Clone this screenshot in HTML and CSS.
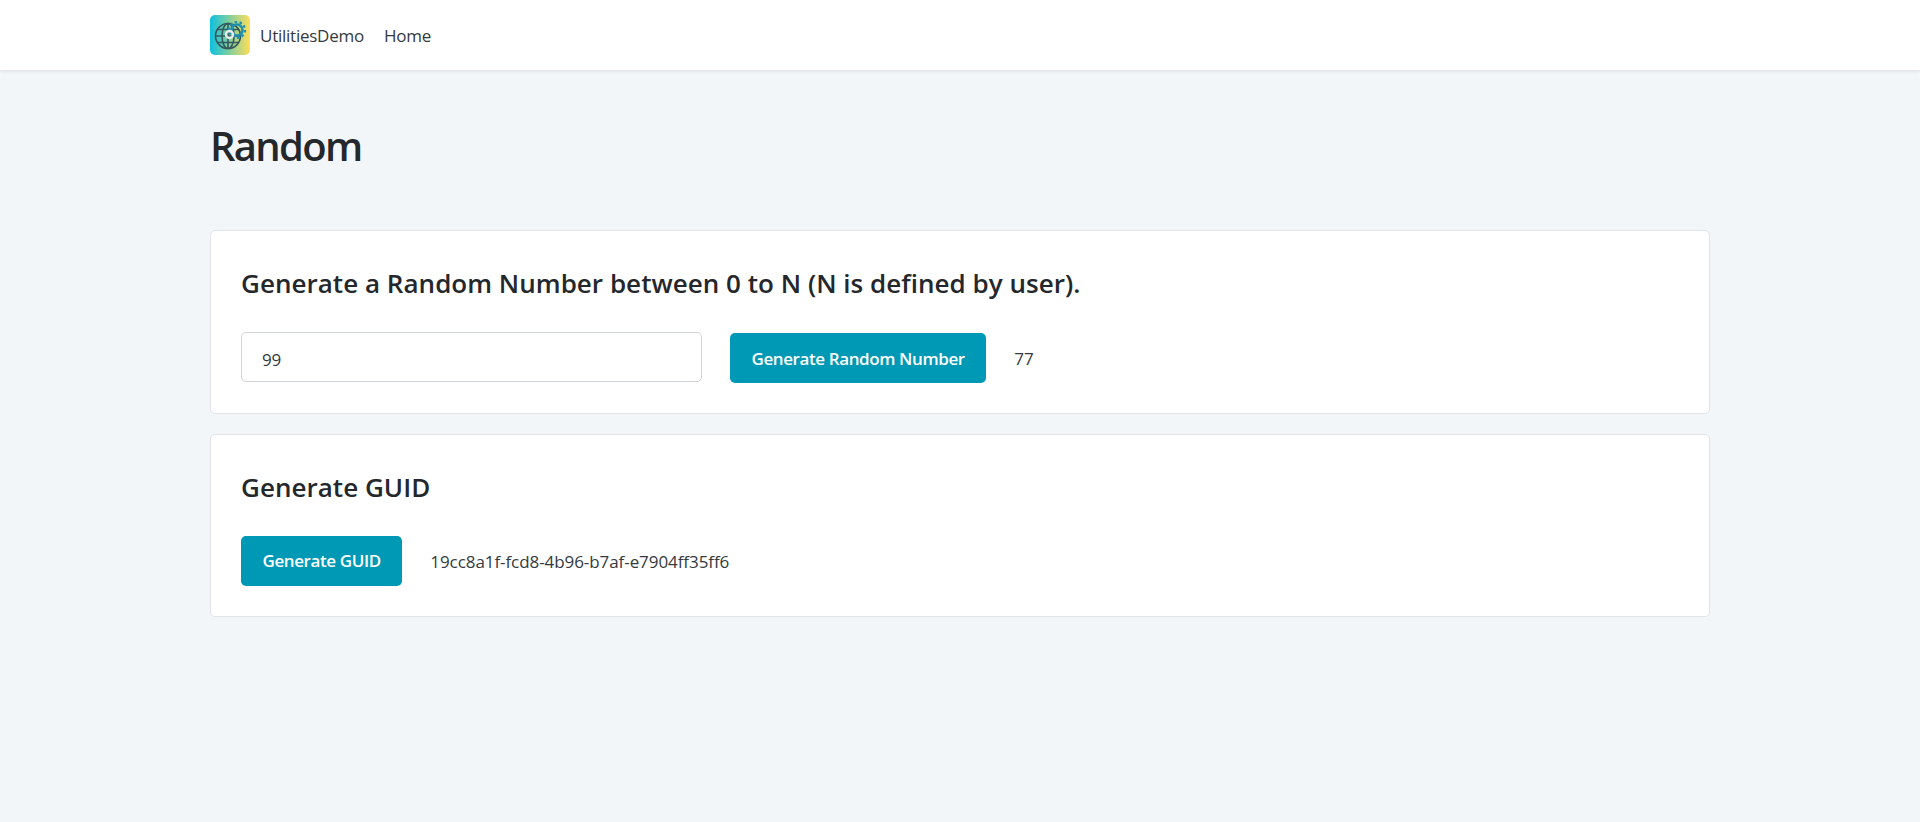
FILE: index.html
```html
<!DOCTYPE html>
<html lang="en">
<head>
<meta charset="utf-8">
<title>Random</title>
<link rel="stylesheet" href="styles.css">
</head>
<body>
<header class="navbar">
  <nav class="nav-inner">
    <a class="brand" href="#">
      <svg class="logo" viewBox="0 0 40 40" aria-hidden="true">
        <defs>
          <linearGradient id="lg" x1="0" y1="0" x2="1" y2="0">
            <stop offset="0" stop-color="#0cc0df"/>
            <stop offset="1" stop-color="#ffde59"/>
          </linearGradient>
        </defs>
        <rect width="40" height="40" rx="5" fill="url(#lg)"/>
        <g fill="none" stroke="#37595c" stroke-width="1.6">
          <circle cx="18" cy="21" r="12.5"/>
          <ellipse cx="18" cy="21" rx="6" ry="12.5"/>
          <path d="M18 8.500v25M5.500 21h25M7.500 14.500h21M7.500 27.500h21"/>
        </g>
        <g fill="none" stroke="#1f8fb0">
          <circle cx="27" cy="15" r="5.500" stroke-width="2.600"/>
          <circle cx="27" cy="15" r="8" stroke-width="2.200" stroke-dasharray="2.500 2.500"/>
        </g>
        <circle cx="19.500" cy="19.500" r="3.500" fill="none" stroke="#e8efe8" stroke-width="2.400"/>
      </svg>
      <span>UtilitiesDemo</span>
    </a>
    <a class="nav-link" href="#">Home</a>
  </nav>
</header>
<main class="container">
  <h1 class="page-title">Random</h1>
  <section class="card">
    <h2 class="card-title">Generate a Random Number between 0 to N (N is defined by user).</h2>
    <div class="row">
      <input class="field" type="text" value="99">
      <button class="btn btn-offset" type="button">Generate Random Number</button>
      <span class="result">77</span>
    </div>
  </section>
  <section class="card">
    <h2 class="card-title">Generate GUID</h2>
    <div class="row">
      <button class="btn" type="button">Generate GUID</button>
      <span class="result">19cc8a1f-fcd8-4b96-b7af-e7904ff35ff6</span>
    </div>
  </section>
</main>
</body>
</html>
```
FILE: styles.css
```css
* { box-sizing: border-box; }
html, body { margin: 0; }
body {
  min-height: 822px;
  background: #f3f6f9;
  color: #24272b;
  font-family: "Open Sans", "Noto Sans", sans-serif;
  font-size: 17px;
}
.navbar {
  height: 70px;
  background: #fff;
  box-shadow: 0 1px 4px rgba(0, 0, 0, .1);
}
.nav-inner {
  width: 1500px;
  height: 100%;
  margin: 0 auto;
  display: flex;
  align-items: center;
  gap: 20px;
}
.brand, .nav-link {
  color: #343a40;
  text-decoration: none;
  font-size: 17px;
  letter-spacing: -.25px;
}
.brand { display: flex; align-items: center; gap: 10px; }
.logo { width: 40px; height: 40px; display: block; }
.container {
  width: 1500px;
  margin: 0 auto;
  display: flex;
  flex-direction: column;
  gap: 20px;
}
.page-title {
  margin: 52px 0 28px;
  height: 60px;
  font-size: 40px;
  line-height: 48px;
  font-weight: 600;
  letter-spacing: -1.7px;
}
.card {
  height: 183.5px;
  padding: 36px 30px 0;
  background: #fff;
  border: 1px solid #e1e5ea;
  border-radius: 5px;
}
.card-title {
  margin: 0 0 33px;
  font-size: 26px;
  line-height: 32px;
  font-weight: 600;
  letter-spacing: .03px;
}
.row { display: flex; align-items: flex-start; }
.field {
  width: 461px;
  height: 50px;
  padding: 4px 20px 0;
  border: 1px solid #ced4da;
  border-radius: 5px;
  background: #fff;
  color: #343a40;
  font: inherit;
  letter-spacing: -.2px;
  margin-right: 28px;
}
.btn {
  height: 50px;
  padding: 0 21.5px;
  border: 0;
  border-radius: 5px;
  background: #0099b5;
  color: #fff;
  font: 600 17px "Open Sans", "Noto Sans", sans-serif;
  letter-spacing: -.4px;
  margin-right: 28px;
}
.btn-offset { margin-top: 1px; }
.result {
  align-self: center;
  padding-top: 1px;
  color: #343a40;
  letter-spacing: -.07px;
}
```
